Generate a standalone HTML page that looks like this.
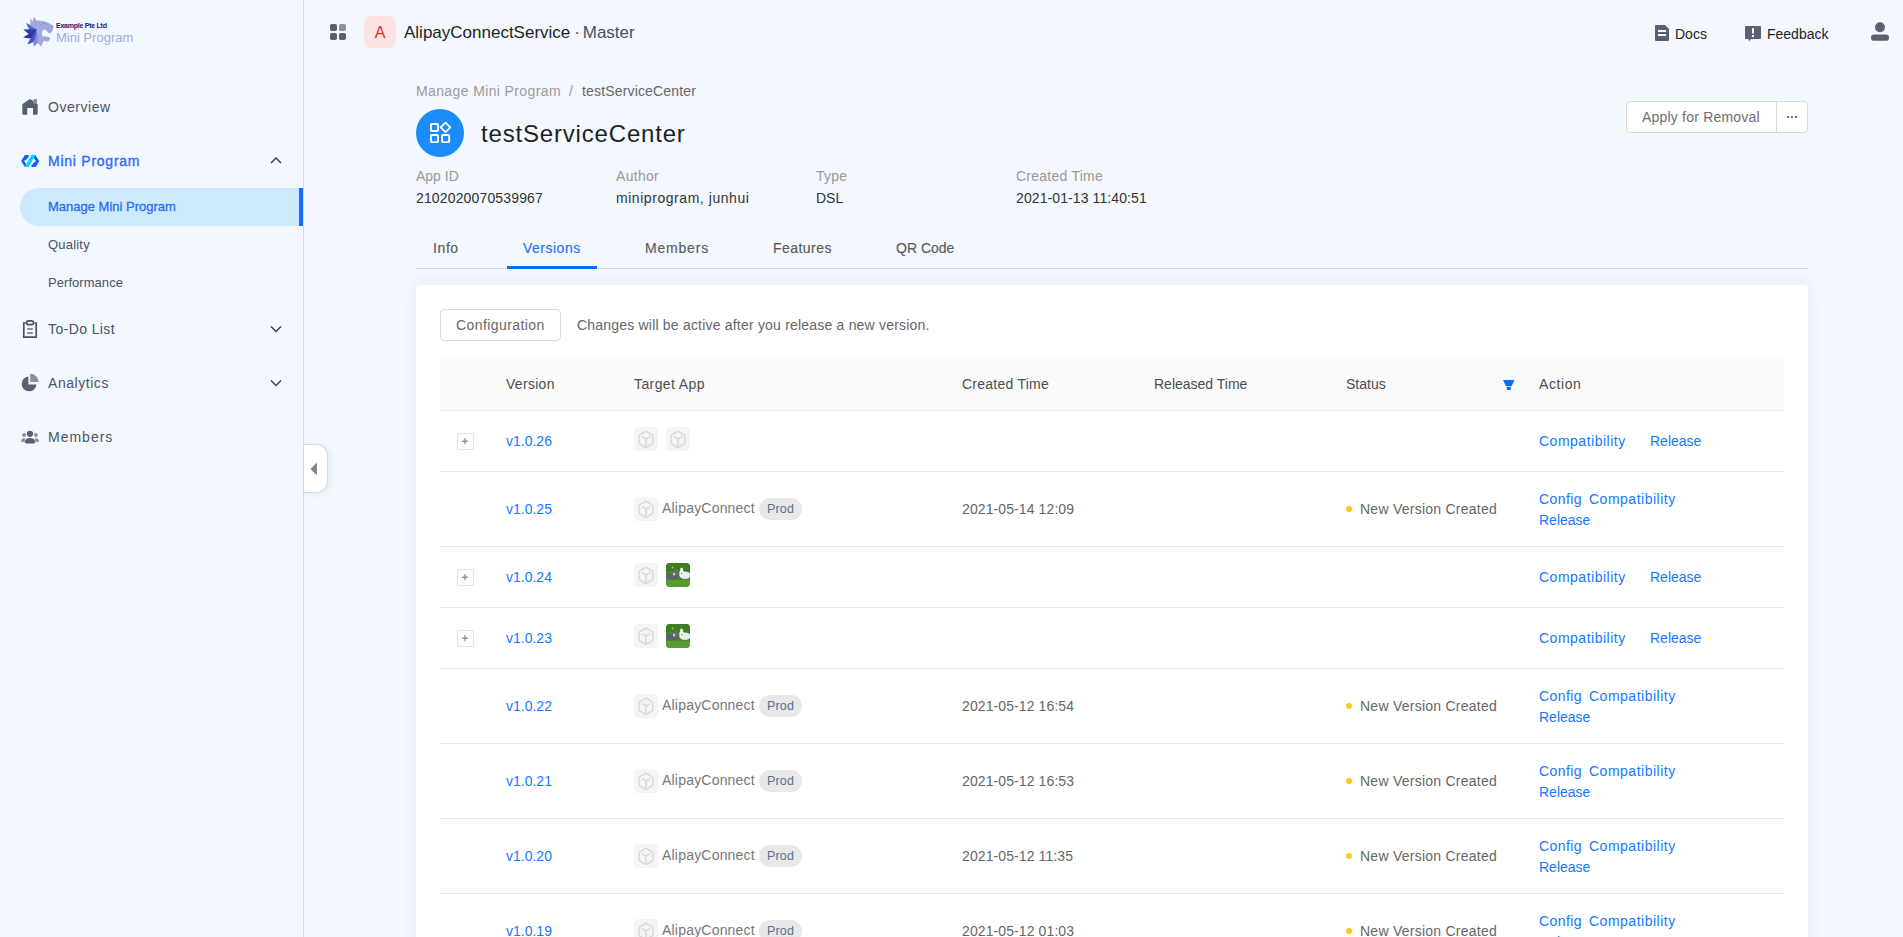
<!DOCTYPE html>
<html><head><meta charset="utf-8">
<style>
*{box-sizing:border-box;margin:0;padding:0}
html,body{width:1903px;height:937px;overflow:hidden;background:#f3f7fe;font-family:"Liberation Sans",sans-serif;color:#333}
.a{position:absolute;white-space:nowrap}
.t14{font-size:14px;line-height:20px}
#side{position:absolute;left:0;top:0;width:304px;height:937px;border-right:1px solid #d5dce9;background:#f3f7fe}
.nav{color:#4b5364;font-size:14px;line-height:20px}
.navi{position:absolute}
.sub{color:#4b5364;font-size:13px;line-height:20px}
</style></head><body>
<div id="side">
  <!-- logo -->
  <svg class="a" style="left:20px;top:14px" width="38" height="36" viewBox="0 0 38 36">
    <path d="M10.4 3.4 Q11.4 5.6 12.6 7.6 Q13.2 4.8 14.4 2.7 Q15.4 5 16.6 6.6 Q21 6.9 25 7.4 Q28.5 8.2 31.2 10.4 Q33.6 11.6 33.5 12.8 Q33 14.6 32.7 16.2 Q31.5 18.5 30 20 L29 18.4 L28.2 19.2 L27.4 17.4 Q26 15.8 24.2 15.6 Q21.8 16 21.8 19.2 Q21.9 22.4 24.4 22.8 L25.4 21.8 L26.3 23.2 L27.3 22.3 Q29.2 23.2 30.3 24.6 Q29.6 26.6 28.2 27.4 Q25.8 27.6 23.6 26.8 Q22.4 29.8 21.3 32.5 Q19.2 30.6 17.4 28.8 Q15.6 30.8 13.8 32.5 Q12.4 27 11.4 23 Q9.2 17 6.1 9.0 Q8.4 10.4 10.4 11.2 Z" fill="#a0a8de"/>
    <path d="M6.1 9.0 Q9.8 10.6 12.5 13 Q14.4 14.6 16.6 15.2 Q14.4 17.6 12.4 19 Q9.6 15.4 6.1 9.0 Z" fill="#5561c6"/>
    <path d="M3.3 15.6 Q8.8 15.2 16.4 15.2 Q14.6 19.6 11.6 21.8 Q7.6 19.6 3.3 15.6 Z" fill="#2f3ba8"/>
    <path d="M3.1 23.4 Q9.6 18.8 16.4 15.4 Q15.4 21.4 12.2 24.6 Q8.2 24.4 3.1 23.4 Z" fill="#2e3aa6"/>
    <path d="M7.1 30.4 Q11.4 22.6 16.5 15.6 Q16.4 23.4 13.6 27.8 Q10.6 29.6 7.1 30.4 Z" fill="#4250bf"/>
    <path d="M13.8 32.5 Q14.6 23.8 16.6 15.6 Q18.4 22.2 17.6 28.8 Q15.8 30.8 13.8 32.5 Z" fill="#7d88d2"/>
    <path d="M22.6 8.8 Q24.2 8.4 25.6 9.6 Q23.8 10 22.6 8.8 Z" fill="#4c58b8"/>
    <path d="M13.6 11 Q15.6 11.2 17 12 Q15 12.2 13.6 11 Z" fill="#8e98d6"/>
    <path d="M31.6 11.2 Q33.4 11.8 33.3 13.2 L32.3 12.6 Z" fill="#6d78c8"/>
  </svg>
  <div class="a" style="left:56px;top:21px;font-size:7px;line-height:10px;font-weight:bold;color:#1b1970;letter-spacing:-0.25px">Example Pte Ltd</div>
  <div class="a" style="left:56px;top:30px;font-size:13px;line-height:15px;color:#a3abe0">Mini Program</div>

  <!-- Overview -->
  <svg class="a" style="left:22px;top:99px" width="16" height="16" viewBox="0 0 16 16">
    <path d="M0.3 6 Q0.3 5.3 1 4.8 L7 0.5 Q8 -0.1 9 0.5 L15 4.8 Q15.7 5.3 15.7 6 V14.5 Q15.7 15.8 14.4 15.8 H11 V9 H5.2 V15.8 H1.6 Q0.3 15.8 0.3 14.5 Z" fill="#586071"/>
    <rect x="11.5" y="0" width="3.5" height="4.6" fill="#8b909b"/>
  </svg>
  <div class="a nav" style="left:48px;top:97px;letter-spacing:0.55px">Overview</div>

  <!-- Mini Program -->
  <svg class="a" style="left:21px;top:155px" width="18" height="12" viewBox="0 0 18 12">
    <path d="M3.85 0 L7 0 Q8.3 0.3 7.85 1.4 L6.2 3.9 L3.0 6.1 L5.3 9.3 L3.85 12 L0.1 6.1 Z" fill="#0a64ff"/>
    <path d="M14.4 0 L18.2 6.1 L14.6 12 L11.2 12 Q10 11.6 10.2 10.8 L12.1 8.6 L14.9 6.1 L12.5 2.7 Z" fill="#0a64ff"/>
    <path d="M10.4 0 L14.4 0 L7.6 12 L3.85 12 Z" fill="#00d2fc"/>
  </svg>
  <div class="a nav" style="left:48px;top:151px;color:#2a6af8;-webkit-text-stroke:0.35px #2a6af8;letter-spacing:0.75px">Mini Program</div>
  <svg class="a" style="left:270px;top:157px" width="12" height="7" viewBox="0 0 12 7"><path d="M1 6 L6 1 L11 6" fill="none" stroke="#3d4452" stroke-width="1.5"/></svg>

  <div class="a" style="left:20px;top:188px;width:283px;height:38px;background:#cdeafd;border-radius:19px 0 0 19px"></div>
  <div class="a" style="left:299px;top:188px;width:4px;height:38px;background:#1a6dff"></div>
  <div class="a" style="left:48px;top:197px;font-size:13px;line-height:20px;color:#2d6cf2;-webkit-text-stroke:0.3px #2d6cf2;letter-spacing:0px">Manage Mini Program</div>
  <div class="a sub" style="left:48px;top:235px;letter-spacing:0.2px">Quality</div>
  <div class="a sub" style="left:48px;top:273px;letter-spacing:0.05px">Performance</div>

  <!-- To-Do -->
  <svg class="a" style="left:22px;top:319px" width="16" height="20" viewBox="0 0 16 20">
    <path d="M3.5 4 H1.8 V18.2 H14.2 V4 H12.5" fill="none" stroke="#4a5263" stroke-width="1.7"/>
    <rect x="4.5" y="1.8" width="7" height="3.8" rx="1.9" fill="none" stroke="#4a5263" stroke-width="1.7"/>
    <rect x="5.2" y="9.2" width="5.6" height="1.6" fill="#6d7482"/>
    <rect x="5.2" y="13.2" width="5.6" height="1.6" fill="#6d7482"/>
  </svg>
  <div class="a nav" style="left:48px;top:319px;letter-spacing:0.4px">To-Do List</div>
  <svg class="a" style="left:270px;top:325px" width="12" height="8" viewBox="0 0 12 8"><path d="M1 1.5 L6 6.5 L11 1.5" fill="none" stroke="#3d4452" stroke-width="1.5"/></svg>

  <!-- Analytics -->
  <svg class="a" style="left:21px;top:373px" width="19" height="19" viewBox="0 0 19 19">
    <path d="M7.4 3.6 A7.4 7.4 0 1 0 15.4 11.4 H7.4 Z" fill="#586071"/>
    <path d="M9.2 0.8 A8.4 8.4 0 0 1 17.6 8.9 H9.2 Z" fill="#8b909b"/>
  </svg>
  <div class="a nav" style="left:48px;top:373px;letter-spacing:0.55px">Analytics</div>
  <svg class="a" style="left:270px;top:379px" width="12" height="8" viewBox="0 0 12 8"><path d="M1 1.5 L6 6.5 L11 1.5" fill="none" stroke="#3d4452" stroke-width="1.5"/></svg>

  <!-- Members -->
  <svg class="a" style="left:20px;top:430px" width="20" height="15" viewBox="0 0 20 15">
    <circle cx="10" cy="3.8" r="3.1" fill="#586071"/>
    <circle cx="4.1" cy="4.9" r="2" fill="#8b909b"/>
    <circle cx="15.9" cy="4.9" r="2" fill="#8b909b"/>
    <path d="M0.8 11.6 Q1 8.3 4 8.2 Q4.8 8.2 5.3 8.5 L4.6 12.2 Z" fill="#8b909b"/>
    <path d="M19.2 11.6 Q19 8.3 16 8.2 Q15.2 8.2 14.7 8.5 L15.4 12.2 Z" fill="#8b909b"/>
    <path d="M5 12.2 Q5 8 10 8 Q15 8 15 12.2 Q15 13.5 13.6 13.5 H6.4 Q5 13.5 5 12.2 Z" fill="#586071"/>
  </svg>
  <div class="a nav" style="left:48px;top:427px;letter-spacing:1px">Members</div>
</div>
<!-- collapse toggle -->
<div class="a" style="left:304px;top:444px;width:24px;height:49px;background:#fff;border:1px solid #d3dae7;border-left:none;border-radius:0 12px 12px 0;box-shadow:2px 1px 6px rgba(40,60,120,0.07)"></div>
<svg class="a" style="left:310px;top:462px" width="8" height="14" viewBox="0 0 8 14"><path d="M7 0.5 V13.5 L0.5 7 Z" fill="#80858f"/></svg>


<!-- TOPBAR -->
<svg class="a" style="left:330px;top:24px" width="16" height="16" viewBox="0 0 16 16">
  <rect x="0" y="0" width="7" height="7" rx="1.8" fill="#586071"/>
  <rect x="9" y="0" width="7" height="7" rx="1.8" fill="#8b909b"/>
  <rect x="0" y="9" width="7" height="7" rx="1.8" fill="#586071"/>
  <rect x="9" y="9" width="7" height="7" rx="1.8" fill="#586071"/>
</svg>
<div class="a" style="left:364px;top:16px;width:32px;height:32px;border-radius:8px;background:#fde3e3;color:#d0312d;font-size:16px;line-height:33px;text-align:center">A</div>
<div class="a" style="left:404px;top:21px;font-size:17px;line-height:24px;color:#1f1f1f">AlipayConnectService<span style="color:#47505e;letter-spacing:-0.9px"> · </span><span style="color:#47505e">Master</span></div>

<svg class="a" style="left:1655px;top:25px" width="14" height="16" viewBox="0 0 14 16">
  <path d="M1 0 H10 L14 4 V15 Q14 16 13 16 H1 Q0 16 0 15 V1 Q0 0 1 0 Z" fill="#586071"/>
  <rect x="3" y="5" width="8" height="2" fill="#fff"/>
  <rect x="3" y="9" width="8" height="2" fill="#fff"/>
</svg>
<div class="a t14" style="left:1675px;top:24px;color:#1f1f1f">Docs</div>
<svg class="a" style="left:1745px;top:26px" width="16" height="16" viewBox="0 0 16 16">
  <path d="M1 0 H15 Q16 0 16 1 V12 Q16 13 15 13 H6 L4 15.5 L3.5 13 H1 Q0 13 0 12 V1 Q0 0 1 0 Z" fill="#586071"/>
  <rect x="7" y="2.2" width="2" height="5.3" fill="#fff"/>
  <rect x="7" y="9" width="2" height="2" fill="#fff"/>
</svg>
<div class="a t14" style="left:1767px;top:24px;color:#1f1f1f">Feedback</div>
<svg class="a" style="left:1871px;top:22px" width="18" height="19" viewBox="0 0 18 19">
  <circle cx="9" cy="5.2" r="5" fill="#586071"/>
  <rect x="0" y="12.5" width="18" height="6.3" rx="3.1" fill="#586071"/>
</svg>

<!-- HEADER -->
<div class="a t14" style="left:416px;top:81px;color:#9b9b9b;letter-spacing:0.38px">Manage Mini Program</div>
<div class="a t14" style="left:569px;top:81px;color:#9b9b9b">/</div>
<div class="a t14" style="left:582px;top:81px;color:#666;letter-spacing:0.16px">testServiceCenter</div>

<div class="a" style="left:416px;top:109px;width:48px;height:48px;border-radius:50%;background:#1b8cfb"></div>
<svg class="a" style="left:430px;top:123px;overflow:visible" width="21" height="21" viewBox="0 0 21 21">
  <g fill="none" stroke="#fff" stroke-width="1.9">
    <rect x="0.95" y="0.95" width="7.1" height="7.1" rx="0.8"/>
    <rect x="0.95" y="12.05" width="7.1" height="7.1" rx="0.8"/>
    <rect x="12.05" y="12.05" width="7.1" height="7.1" rx="0.8"/>
    <path d="M15.5 -0.4 L20.3 4.4 L15.5 9.2 L10.7 4.4 Z" stroke-linejoin="round"/>
  </g>
</svg>
<div class="a" style="left:481px;top:118px;font-size:24px;line-height:32px;color:#1f1f1f;letter-spacing:0.82px">testServiceCenter</div>

<div class="a t14" style="left:416px;top:166px;color:#999">App ID</div>
<div class="a t14" style="left:416px;top:188px;color:#333;letter-spacing:0.15px">2102020070539967</div>
<div class="a t14" style="left:616px;top:166px;color:#999;letter-spacing:0.3px">Author</div>
<div class="a t14" style="left:616px;top:188px;color:#333;letter-spacing:0.55px">miniprogram, junhui</div>
<div class="a t14" style="left:816px;top:166px;color:#999;letter-spacing:0.2px">Type</div>
<div class="a t14" style="left:816px;top:188px;color:#333">DSL</div>
<div class="a t14" style="left:1016px;top:166px;color:#999;letter-spacing:0.25px">Created Time</div>
<div class="a t14" style="left:1016px;top:188px;color:#333;letter-spacing:0.1px">2021-01-13 11:40:51</div>

<div class="a" style="left:1626px;top:101px;width:182px;height:32px;background:#fff;border:1px solid #d9d9d9;border-radius:4px"></div>
<div class="a" style="left:1776px;top:101px;width:1px;height:32px;background:#d9d9d9"></div>
<div class="a t14" style="left:1642px;top:107px;color:#6e6e6e;letter-spacing:0.2px">Apply for Removal</div>
<svg class="a" style="left:1786px;top:115px" width="12" height="4" viewBox="0 0 12 4"><rect x="1" y="1" width="2.1" height="2.1" fill="#707070"/><rect x="4.9" y="1" width="2.1" height="2.1" fill="#707070"/><rect x="8.9" y="1" width="2.1" height="2.1" fill="#707070"/></svg>

<!-- TABS -->
<div class="a" style="left:416px;top:268px;width:1392px;height:1px;background:#d2dae8"></div>
<div class="a" style="left:507px;top:266px;width:90px;height:3px;background:#0a6cff"></div>
<div class="a t14" style="left:433px;top:238px;color:#5a5a5a;-webkit-text-stroke:0.15px #5a5a5a;letter-spacing:0.6px">Info</div>
<div class="a t14" style="left:523px;top:238px;color:#1a74f5;-webkit-text-stroke:0.15px #1a74f5;letter-spacing:0.5px">Versions</div>
<div class="a t14" style="left:645px;top:238px;color:#5a5a5a;-webkit-text-stroke:0.15px #5a5a5a;letter-spacing:0.8px">Members</div>
<div class="a t14" style="left:773px;top:238px;color:#5a5a5a;-webkit-text-stroke:0.15px #5a5a5a;letter-spacing:0.45px">Features</div>
<div class="a t14" style="left:896px;top:238px;color:#5a5a5a;-webkit-text-stroke:0.15px #5a5a5a">QR Code</div>

<!-- CARD -->
<div class="a" style="left:416px;top:285px;width:1392px;height:700px;background:#fff;border-radius:4px;box-shadow:0 0 16px rgba(40,80,160,0.07)"></div>
<div class="a" style="left:440px;top:309px;width:121px;height:32px;border:1px solid #d9d9d9;border-radius:4px"></div>
<div class="a t14" style="left:456px;top:315px;color:#666;letter-spacing:0.42px">Configuration</div>
<div class="a t14" style="left:577px;top:315px;color:#666;letter-spacing:0.2px">Changes will be active after you release a new version.</div>

<div class="a" style="left:440px;top:357px;width:1344px;height:54px;background:#fafafa;border-radius:2px 2px 0 0;border-bottom:1px solid #e8e8e8"></div>
<div class="a t14" style="left:506px;top:374px;color:#4d4d4d;letter-spacing:0.3px">Version</div>
<div class="a t14" style="left:634px;top:374px;color:#4d4d4d;letter-spacing:0.4px">Target App</div>
<div class="a t14" style="left:962px;top:374px;color:#4d4d4d;letter-spacing:0.25px">Created Time</div>
<div class="a t14" style="left:1154px;top:374px;color:#4d4d4d">Released Time</div>
<div class="a t14" style="left:1346px;top:374px;color:#4d4d4d">Status</div>
<svg class="a" style="left:1503px;top:380px" width="12" height="10" viewBox="0 0 12 10"><path d="M0 0 H11.5 L8.5 6.2 H3 Z M3.8 7 H7.8 V10 H3.8 Z" fill="#0a6cff"/></svg>
<div class="a t14" style="left:1539px;top:374px;color:#4d4d4d;letter-spacing:0.6px">Action</div>
<!-- ROWS -->
<div class="a" style="left:440px;top:471px;width:1344px;height:1px;background:#e8e8e8"></div>
<div class="a" style="left:457px;top:433px;width:17px;height:17px;border:1px solid #e3e3e3;border-radius:2px;background:#fff"></div>
<svg class="a" style="left:461px;top:437px" width="9" height="9" viewBox="0 0 9 9"><rect x="1" y="3.6" width="6" height="1.3" fill="#8a8a8a"/><rect x="3.35" y="1.2" width="1.3" height="6" fill="#8a8a8a"/></svg>
<div class="a t14" style="left:506px;top:431px;color:#1677ff">v1.0.26</div>
<div class="a" style="left:634px;top:427px;width:24px;height:24px"><svg width="24" height="24" viewBox="0 0 24 24"><rect width="24" height="24" rx="4" fill="#f5f5f5"/><g fill="none" stroke="#d9d9d9" stroke-width="1.45" stroke-linejoin="round"><path d="M12 4.2 L18.8 8.1 V16.6 L12 20.5 L5.2 16.6 V8.1 Z"/><path d="M7.8 9.6 L12 12 L16.2 9.6 M12 12 V19.5"/></g></svg></div>
<div class="a" style="left:666px;top:427px;width:24px;height:24px"><svg width="24" height="24" viewBox="0 0 24 24"><rect width="24" height="24" rx="4" fill="#f5f5f5"/><g fill="none" stroke="#d9d9d9" stroke-width="1.45" stroke-linejoin="round"><path d="M12 4.2 L18.8 8.1 V16.6 L12 20.5 L5.2 16.6 V8.1 Z"/><path d="M7.8 9.6 L12 12 L16.2 9.6 M12 12 V19.5"/></g></svg></div>
<div class="a t14" style="left:1539px;top:431px;color:#1677ff;letter-spacing:0.5px">Compatibility</div>
<div class="a t14" style="left:1650px;top:431px;color:#1677ff">Release</div>
<div class="a" style="left:440px;top:546px;width:1344px;height:1px;background:#e8e8e8"></div>
<div class="a t14" style="left:506px;top:499px;color:#1677ff">v1.0.25</div>
<div class="a" style="left:634px;top:497px;width:24px;height:24px"><svg width="24" height="24" viewBox="0 0 24 24"><rect width="24" height="24" rx="4" fill="#f5f5f5"/><g fill="none" stroke="#d9d9d9" stroke-width="1.45" stroke-linejoin="round"><path d="M12 4.2 L18.8 8.1 V16.6 L12 20.5 L5.2 16.6 V8.1 Z"/><path d="M7.8 9.6 L12 12 L16.2 9.6 M12 12 V19.5"/></g></svg></div>
<div class="a t14" style="left:662px;top:498px;color:#777;letter-spacing:0.2px">AlipayConnect</div>
<div class="a" style="left:759px;top:498px;width:43px;height:22px;border-radius:11px;background:#e8e8e8;color:#587190;font-size:12.5px;line-height:22px;text-align:center;letter-spacing:0.2px">Prod</div>
<div class="a t14" style="left:962px;top:499px;color:#666;letter-spacing:0.1px">2021-05-14 12:09</div>
<div class="a" style="left:1346px;top:506px;width:6px;height:6px;border-radius:50%;background:#facb17"></div>
<div class="a t14" style="left:1360px;top:499px;color:#666;letter-spacing:0.25px">New Version Created</div>
<div class="a t14" style="left:1539px;top:489px;color:#1677ff;letter-spacing:0.4px">Config</div>
<div class="a t14" style="left:1589px;top:489px;color:#1677ff;letter-spacing:0.5px">Compatibility</div>
<div class="a t14" style="left:1539px;top:510px;color:#1677ff">Release</div>
<div class="a" style="left:440px;top:607px;width:1344px;height:1px;background:#e8e8e8"></div>
<div class="a" style="left:457px;top:569px;width:17px;height:17px;border:1px solid #e3e3e3;border-radius:2px;background:#fff"></div>
<svg class="a" style="left:461px;top:573px" width="9" height="9" viewBox="0 0 9 9"><rect x="1" y="3.6" width="6" height="1.3" fill="#8a8a8a"/><rect x="3.35" y="1.2" width="1.3" height="6" fill="#8a8a8a"/></svg>
<div class="a t14" style="left:506px;top:567px;color:#1677ff">v1.0.24</div>
<div class="a" style="left:634px;top:563px;width:24px;height:24px"><svg width="24" height="24" viewBox="0 0 24 24"><rect width="24" height="24" rx="4" fill="#f5f5f5"/><g fill="none" stroke="#d9d9d9" stroke-width="1.45" stroke-linejoin="round"><path d="M12 4.2 L18.8 8.1 V16.6 L12 20.5 L5.2 16.6 V8.1 Z"/><path d="M7.8 9.6 L12 12 L16.2 9.6 M12 12 V19.5"/></g></svg></div>
<div class="a" style="left:666px;top:563px;width:24px;height:24px"><svg width="24" height="24" viewBox="0 0 24 24"><defs><clipPath id="rc1"><rect width="24" height="24" rx="4"/></clipPath></defs><g clip-path="url(#rc1)"><rect width="24" height="24" fill="#4c8a28"/><rect y="0" width="24" height="9" fill="#3f7d22"/><rect y="17" width="24" height="7" fill="#5b9a30"/><circle cx="6.5" cy="4.5" r="0.9" fill="#c8c828"/><circle cx="5.8" cy="9.2" r="0.6" fill="#c8c828"/><ellipse cx="6" cy="13" rx="6.5" ry="3.6" fill="#5c636c"/><ellipse cx="10" cy="9.5" rx="2.2" ry="3.4" fill="#646b75"/><ellipse cx="8" cy="11" rx="1.2" ry="1.5" fill="#c9ced3"/><ellipse cx="19" cy="12.2" rx="5.5" ry="3.8" fill="#e4ecf3"/><ellipse cx="15.6" cy="10" rx="2.2" ry="3.6" fill="#f2f6fa"/><rect x="14.2" y="4.8" width="2.8" height="4" rx="1.2" fill="#f2f6fa"/><ellipse cx="15.8" cy="10.8" rx="0.8" ry="0.7" fill="#7a8088"/></g></svg></div>
<div class="a t14" style="left:1539px;top:567px;color:#1677ff;letter-spacing:0.5px">Compatibility</div>
<div class="a t14" style="left:1650px;top:567px;color:#1677ff">Release</div>
<div class="a" style="left:440px;top:668px;width:1344px;height:1px;background:#e8e8e8"></div>
<div class="a" style="left:457px;top:630px;width:17px;height:17px;border:1px solid #e3e3e3;border-radius:2px;background:#fff"></div>
<svg class="a" style="left:461px;top:634px" width="9" height="9" viewBox="0 0 9 9"><rect x="1" y="3.6" width="6" height="1.3" fill="#8a8a8a"/><rect x="3.35" y="1.2" width="1.3" height="6" fill="#8a8a8a"/></svg>
<div class="a t14" style="left:506px;top:628px;color:#1677ff">v1.0.23</div>
<div class="a" style="left:634px;top:624px;width:24px;height:24px"><svg width="24" height="24" viewBox="0 0 24 24"><rect width="24" height="24" rx="4" fill="#f5f5f5"/><g fill="none" stroke="#d9d9d9" stroke-width="1.45" stroke-linejoin="round"><path d="M12 4.2 L18.8 8.1 V16.6 L12 20.5 L5.2 16.6 V8.1 Z"/><path d="M7.8 9.6 L12 12 L16.2 9.6 M12 12 V19.5"/></g></svg></div>
<div class="a" style="left:666px;top:624px;width:24px;height:24px"><svg width="24" height="24" viewBox="0 0 24 24"><defs><clipPath id="rc2"><rect width="24" height="24" rx="4"/></clipPath></defs><g clip-path="url(#rc2)"><rect width="24" height="24" fill="#4c8a28"/><rect y="0" width="24" height="9" fill="#3f7d22"/><rect y="17" width="24" height="7" fill="#5b9a30"/><circle cx="6.5" cy="4.5" r="0.9" fill="#c8c828"/><circle cx="5.8" cy="9.2" r="0.6" fill="#c8c828"/><ellipse cx="6" cy="13" rx="6.5" ry="3.6" fill="#5c636c"/><ellipse cx="10" cy="9.5" rx="2.2" ry="3.4" fill="#646b75"/><ellipse cx="8" cy="11" rx="1.2" ry="1.5" fill="#c9ced3"/><ellipse cx="19" cy="12.2" rx="5.5" ry="3.8" fill="#e4ecf3"/><ellipse cx="15.6" cy="10" rx="2.2" ry="3.6" fill="#f2f6fa"/><rect x="14.2" y="4.8" width="2.8" height="4" rx="1.2" fill="#f2f6fa"/><ellipse cx="15.8" cy="10.8" rx="0.8" ry="0.7" fill="#7a8088"/></g></svg></div>
<div class="a t14" style="left:1539px;top:628px;color:#1677ff;letter-spacing:0.5px">Compatibility</div>
<div class="a t14" style="left:1650px;top:628px;color:#1677ff">Release</div>
<div class="a" style="left:440px;top:743px;width:1344px;height:1px;background:#e8e8e8"></div>
<div class="a t14" style="left:506px;top:696px;color:#1677ff">v1.0.22</div>
<div class="a" style="left:634px;top:694px;width:24px;height:24px"><svg width="24" height="24" viewBox="0 0 24 24"><rect width="24" height="24" rx="4" fill="#f5f5f5"/><g fill="none" stroke="#d9d9d9" stroke-width="1.45" stroke-linejoin="round"><path d="M12 4.2 L18.8 8.1 V16.6 L12 20.5 L5.2 16.6 V8.1 Z"/><path d="M7.8 9.6 L12 12 L16.2 9.6 M12 12 V19.5"/></g></svg></div>
<div class="a t14" style="left:662px;top:695px;color:#777;letter-spacing:0.2px">AlipayConnect</div>
<div class="a" style="left:759px;top:695px;width:43px;height:22px;border-radius:11px;background:#e8e8e8;color:#587190;font-size:12.5px;line-height:22px;text-align:center;letter-spacing:0.2px">Prod</div>
<div class="a t14" style="left:962px;top:696px;color:#666;letter-spacing:0.1px">2021-05-12 16:54</div>
<div class="a" style="left:1346px;top:703px;width:6px;height:6px;border-radius:50%;background:#facb17"></div>
<div class="a t14" style="left:1360px;top:696px;color:#666;letter-spacing:0.25px">New Version Created</div>
<div class="a t14" style="left:1539px;top:686px;color:#1677ff;letter-spacing:0.4px">Config</div>
<div class="a t14" style="left:1589px;top:686px;color:#1677ff;letter-spacing:0.5px">Compatibility</div>
<div class="a t14" style="left:1539px;top:707px;color:#1677ff">Release</div>
<div class="a" style="left:440px;top:818px;width:1344px;height:1px;background:#e8e8e8"></div>
<div class="a t14" style="left:506px;top:771px;color:#1677ff">v1.0.21</div>
<div class="a" style="left:634px;top:769px;width:24px;height:24px"><svg width="24" height="24" viewBox="0 0 24 24"><rect width="24" height="24" rx="4" fill="#f5f5f5"/><g fill="none" stroke="#d9d9d9" stroke-width="1.45" stroke-linejoin="round"><path d="M12 4.2 L18.8 8.1 V16.6 L12 20.5 L5.2 16.6 V8.1 Z"/><path d="M7.8 9.6 L12 12 L16.2 9.6 M12 12 V19.5"/></g></svg></div>
<div class="a t14" style="left:662px;top:770px;color:#777;letter-spacing:0.2px">AlipayConnect</div>
<div class="a" style="left:759px;top:770px;width:43px;height:22px;border-radius:11px;background:#e8e8e8;color:#587190;font-size:12.5px;line-height:22px;text-align:center;letter-spacing:0.2px">Prod</div>
<div class="a t14" style="left:962px;top:771px;color:#666;letter-spacing:0.1px">2021-05-12 16:53</div>
<div class="a" style="left:1346px;top:778px;width:6px;height:6px;border-radius:50%;background:#facb17"></div>
<div class="a t14" style="left:1360px;top:771px;color:#666;letter-spacing:0.25px">New Version Created</div>
<div class="a t14" style="left:1539px;top:761px;color:#1677ff;letter-spacing:0.4px">Config</div>
<div class="a t14" style="left:1589px;top:761px;color:#1677ff;letter-spacing:0.5px">Compatibility</div>
<div class="a t14" style="left:1539px;top:782px;color:#1677ff">Release</div>
<div class="a" style="left:440px;top:893px;width:1344px;height:1px;background:#e8e8e8"></div>
<div class="a t14" style="left:506px;top:846px;color:#1677ff">v1.0.20</div>
<div class="a" style="left:634px;top:844px;width:24px;height:24px"><svg width="24" height="24" viewBox="0 0 24 24"><rect width="24" height="24" rx="4" fill="#f5f5f5"/><g fill="none" stroke="#d9d9d9" stroke-width="1.45" stroke-linejoin="round"><path d="M12 4.2 L18.8 8.1 V16.6 L12 20.5 L5.2 16.6 V8.1 Z"/><path d="M7.8 9.6 L12 12 L16.2 9.6 M12 12 V19.5"/></g></svg></div>
<div class="a t14" style="left:662px;top:845px;color:#777;letter-spacing:0.2px">AlipayConnect</div>
<div class="a" style="left:759px;top:845px;width:43px;height:22px;border-radius:11px;background:#e8e8e8;color:#587190;font-size:12.5px;line-height:22px;text-align:center;letter-spacing:0.2px">Prod</div>
<div class="a t14" style="left:962px;top:846px;color:#666;letter-spacing:0.1px">2021-05-12 11:35</div>
<div class="a" style="left:1346px;top:853px;width:6px;height:6px;border-radius:50%;background:#facb17"></div>
<div class="a t14" style="left:1360px;top:846px;color:#666;letter-spacing:0.25px">New Version Created</div>
<div class="a t14" style="left:1539px;top:836px;color:#1677ff;letter-spacing:0.4px">Config</div>
<div class="a t14" style="left:1589px;top:836px;color:#1677ff;letter-spacing:0.5px">Compatibility</div>
<div class="a t14" style="left:1539px;top:857px;color:#1677ff">Release</div>
<div class="a" style="left:440px;top:968px;width:1344px;height:1px;background:#e8e8e8"></div>
<div class="a t14" style="left:506px;top:921px;color:#1677ff">v1.0.19</div>
<div class="a" style="left:634px;top:919px;width:24px;height:24px"><svg width="24" height="24" viewBox="0 0 24 24"><rect width="24" height="24" rx="4" fill="#f5f5f5"/><g fill="none" stroke="#d9d9d9" stroke-width="1.45" stroke-linejoin="round"><path d="M12 4.2 L18.8 8.1 V16.6 L12 20.5 L5.2 16.6 V8.1 Z"/><path d="M7.8 9.6 L12 12 L16.2 9.6 M12 12 V19.5"/></g></svg></div>
<div class="a t14" style="left:662px;top:920px;color:#777;letter-spacing:0.2px">AlipayConnect</div>
<div class="a" style="left:759px;top:920px;width:43px;height:22px;border-radius:11px;background:#e8e8e8;color:#587190;font-size:12.5px;line-height:22px;text-align:center;letter-spacing:0.2px">Prod</div>
<div class="a t14" style="left:962px;top:921px;color:#666;letter-spacing:0.1px">2021-05-12 01:03</div>
<div class="a" style="left:1346px;top:928px;width:6px;height:6px;border-radius:50%;background:#facb17"></div>
<div class="a t14" style="left:1360px;top:921px;color:#666;letter-spacing:0.25px">New Version Created</div>
<div class="a t14" style="left:1539px;top:911px;color:#1677ff;letter-spacing:0.4px">Config</div>
<div class="a t14" style="left:1589px;top:911px;color:#1677ff;letter-spacing:0.5px">Compatibility</div>
<div class="a t14" style="left:1539px;top:932px;color:#1677ff">Release</div>
</body></html>
